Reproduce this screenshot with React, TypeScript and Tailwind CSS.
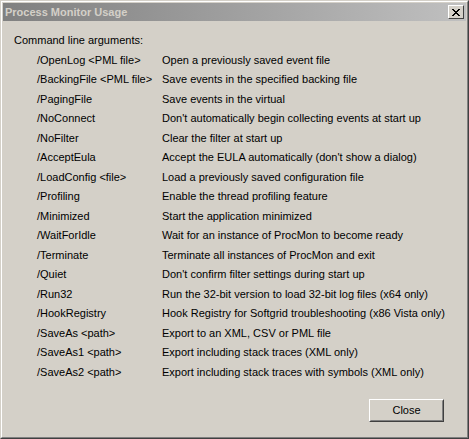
import React from 'react';

const rows: [string, string][] = [
  ['/OpenLog <PML file>', 'Open a previously saved event file'],
  ['/BackingFile <PML file>', 'Save events in the specified backing file'],
  ['/PagingFile', 'Save events in the virtual'],
  ['/NoConnect', "Don't automatically begin collecting events at start up"],
  ['/NoFilter', 'Clear the filter at start up'],
  ['/AcceptEula', "Accept the EULA automatically (don't show a dialog)"],
  ['/LoadConfig <file>', 'Load a previously saved configuration file'],
  ['/Profiling', 'Enable the thread profiling feature'],
  ['/Minimized', 'Start the application minimized'],
  ['/WaitForIdle', 'Wait for an instance of ProcMon to become ready'],
  ['/Terminate', 'Terminate all instances of ProcMon and exit'],
  ['/Quiet', "Don't confirm filter settings during start up"],
  ['/Run32', 'Run the 32-bit version to load 32-bit log files (x64 only)'],
  ['/HookRegistry', 'Hook Registry for Softgrid troubleshooting (x86 Vista only)'],
  ['/SaveAs <path>', 'Export to an XML, CSV or PML file'],
  ['/SaveAs1 <path>', 'Export including stack traces (XML only)'],
  ['/SaveAs2 <path>', 'Export including stack traces with symbols (XML only)'],
];

export default function App() {
  return (
    <div
      className="w-[469px] h-[439px] bg-[#d4d0c8] text-[11px] text-black"
      style={{ fontFamily: '"Liberation Sans", Arial, sans-serif' }}
    >
      {/* window frame */}
      <div className="h-full border border-t-[#d4d0c8] border-l-[#d4d0c8] border-r-[#404040] border-b-[#404040]">
        <div className="h-full flex flex-col border border-t-white border-l-white border-r-[#808080] border-b-[#808080] p-px">
          {/* title bar */}
          <div className="h-[18px] flex items-center justify-between pl-[2px] pr-[2px] bg-gradient-to-r from-[#808080] to-[#c0c0c0]">
            <span className="font-bold text-[#d4d0c8] leading-none">Process Monitor Usage</span>
            <button className="w-[16px] h-[14px] flex items-center justify-center bg-[#d4d0c8] border border-t-white border-l-white border-r-[#404040] border-b-[#404040]">
              <svg width="8" height="7" viewBox="0 0 8 7">
                <path d="M0 0h2v1h1v1h2v-1h1v-1h2v1h-1v1h-1v1h-1v1h1v1h1v1h1v1h-2v-1h-1v-1h-2v1h-1v1h-2v-1h1v-1h1v-1h1v-1h-1v-1h-1v-1h-1z" fill="#000" />
              </svg>
            </button>
          </div>

          {/* body */}
          <div className="flex-1 flex flex-col pt-[10px] pl-[11px] pr-[22px]">
            <div className="leading-[19.5px]">Command line arguments:</div>
            <div className="grid grid-cols-[125px_1fr] pl-[23px] leading-[19.5px]">
              {rows.map(([arg, desc]) => (
                <React.Fragment key={arg}>
                  <div className="whitespace-nowrap">{arg}</div>
                  <div className="whitespace-nowrap">{desc}</div>
                </React.Fragment>
              ))}
            </div>
            <div className="flex justify-end mt-[17px]">
              <button className="w-[75px] h-[23px] bg-[#d4d0c8] border border-t-white border-l-white border-r-[#404040] border-b-[#404040]">
                <div className="h-full flex items-center justify-center border border-t-transparent border-l-transparent border-r-[#808080] border-b-[#808080]">
                  Close
                </div>
              </button>
            </div>
          </div>
        </div>
      </div>
    </div>
  );
}
